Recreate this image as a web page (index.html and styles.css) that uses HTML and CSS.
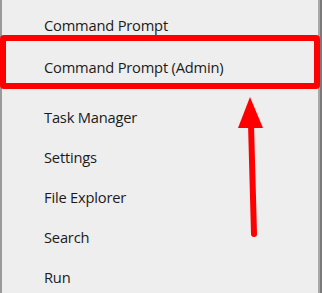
FILE: index.html
```html
<!DOCTYPE html>
<html lang="en">
<head>
    <meta charset="UTF-8">
    <title>Power User Menu</title>
    <link rel="stylesheet" href="styles.css">
</head>
<body>
    <div class="menu">
        <ul class="menu-group">
            <li class="menu-item">Command Prompt</li>
            <li class="menu-item highlighted">Command Prompt (Admin)</li>
        </ul>
        <div class="separator"></div>
        <ul class="menu-group">
            <li class="menu-item">Task Manager</li>
            <li class="menu-item">Settings</li>
            <li class="menu-item">File Explorer</li>
            <li class="menu-item">Search</li>
            <li class="menu-item">Run</li>
        </ul>

        <svg class="arrow" width="322" height="293" viewBox="0 0 322 293">
            <polygon points="250,97 238,128 263,128" fill="#ff0000"/>
            <line x1="251" y1="124" x2="254" y2="234" stroke="#ff0000" stroke-width="6" stroke-linecap="round"/>
        </svg>
    </div>
</body>
</html>
```

FILE: styles.css
```css
* {
    margin: 0;
    padding: 0;
    box-sizing: border-box;
}

body {
    font-family: "Open Sans", "Noto Sans", sans-serif;
    background-color: #7a7a7a;
    width: 322px;
    height: 293px;
    overflow: hidden;
}

/* Menu */
.menu {
    position: relative;
    width: 320px;
    height: 293px;
    background-color: #eeeeee;
    border-left: 2px solid #9a9a9a;
    border-right: 2px solid #a8a8a8;
    padding-top: 5px;
}

.menu-group {
    list-style: none;
}

.menu-item {
    height: 40px;
    display: flex;
    align-items: center;
    padding-left: 42px;
    font-size: 14.7px;
    letter-spacing: -0.2px;
    color: #1b1b1b;
}

.menu-item.highlighted {
    margin-top: 1px;
    margin-left: -2px;
    margin-right: -2px;
    height: 42px;
    padding-left: 44px;
    position: relative;
}

.menu-item.highlighted::after {
    content: "";
    position: absolute;
    left: 0;
    right: 0;
    top: -11px;
    bottom: -1px;
    border: 6px solid #ff0000;
    border-radius: 4px;
}

.separator {
    height: 9px;
}

/* Annotation arrow */
.arrow {
    position: absolute;
    top: 0;
    left: -2px;
    pointer-events: none;
}
```
